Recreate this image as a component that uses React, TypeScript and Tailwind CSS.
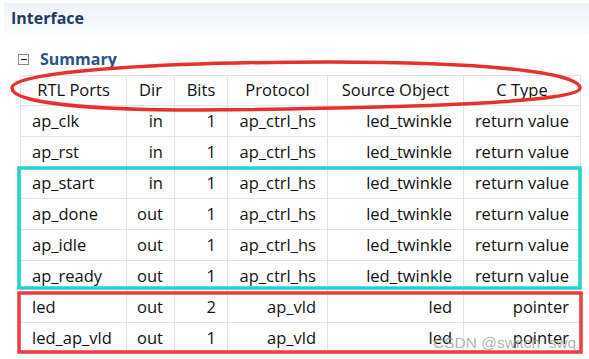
import React from "react";

const cols = [106, 48, 53, 100, 136, 117];
const headers = ["RTL Ports", "Dir", "Bits", "Protocol", "Source Object", "C Type"];
const rows: string[][] = [
  ["ap_clk", "in", "1", "ap_ctrl_hs", "led_twinkle", "return value"],
  ["ap_rst", "in", "1", "ap_ctrl_hs", "led_twinkle", "return value"],
  ["ap_start", "in", "1", "ap_ctrl_hs", "led_twinkle", "return value"],
  ["ap_done", "out", "1", "ap_ctrl_hs", "led_twinkle", "return value"],
  ["ap_idle", "out", "1", "ap_ctrl_hs", "led_twinkle", "return value"],
  ["ap_ready", "out", "1", "ap_ctrl_hs", "led_twinkle", "return value"],
  ["led", "out", "2", "ap_vld", "led", "pointer"],
  ["led_ap_vld", "out", "1", "ap_vld", "led", "pointer"],
];

export default function App() {
  return (
    <div
      className="relative w-[589px] h-[359px] bg-white overflow-hidden text-[#111]"
      style={{ fontFamily: '"Open Sans", "Noto Sans", sans-serif' }}
    >
      <div className="ml-[4px] mt-[3px] h-[30px] bg-gradient-to-b from-[#eef2f7] to-[#fafbfd] flex items-center pl-[7px]">
        <span className="text-[16px] font-bold text-[#1f3a60]">Interface</span>
      </div>
      <div className="flex items-center mt-[16px] ml-[18px] h-[20px]">
        <div className="w-[11px] h-[11px] border border-[#8a8a8a] bg-white flex items-center justify-center">
          <div className="w-[6px] h-[1px] bg-[#222]" />
        </div>
        <span className="ml-[11px] text-[16px] font-bold text-[#2a5288]">Summary</span>
      </div>
      <div className="ml-[20px] mt-[6px] border-l border-t border-[#dfe4ec] w-max">
        <div className="flex h-[30px]">
          {headers.map((h, i) => (
            <div
              key={i}
              style={{ width: cols[i] }}
              className="border-r border-b border-[#dfe4ec] flex items-center justify-center text-[16.5px]"
            >
              {h}
            </div>
          ))}
        </div>
        {rows.map((r, ri) => (
          <div key={ri} className="flex h-[31px]">
            {r.map((c, i) => (
              <div
                key={i}
                style={{ width: cols[i] }}
                className={
                  "border-r border-b border-[#dfe4ec] flex items-center text-[16.5px] " +
                  (i === 0 ? "justify-start pl-[11px]" : "justify-end pr-[11px]")
                }
              >
                {c}
              </div>
            ))}
          </div>
        ))}
      </div>
      <svg className="absolute inset-0 pointer-events-none" width="589" height="359">
        <path
          d="M12,88 C12,70 180,62 330,62 C480,62 580,72 580,88 C580,102 420,108 200,110 C80,110 12,102 12,88 Z"
          fill="none"
          stroke="#e8302e"
          strokeWidth="3.5"
        />
        <rect x="19" y="168" width="561" height="120" fill="none" stroke="#1fd3d3" strokeWidth="3.5" />
        <rect x="19" y="293" width="562" height="59" fill="none" stroke="#f03c3c" strokeWidth="3.5" />
      </svg>
      <div
        className="absolute left-[433px] top-[331px] text-[15.5px] text-[#a0a0a0]/80 whitespace-nowrap"
        style={{ fontFamily: '"Liberation Sans", sans-serif' }}
      >
        CSDN @switch_swq
      </div>
    </div>
  );
}
